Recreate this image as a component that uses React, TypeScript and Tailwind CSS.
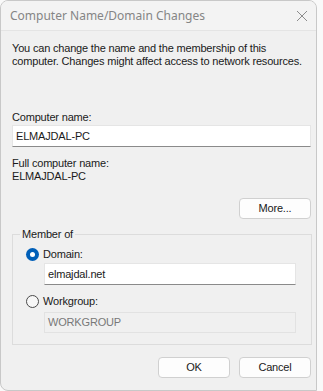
import React from 'react';

const ui = { fontFamily: '"Liberation Sans", Arial, sans-serif' };

const Radio = ({ checked }: { checked: boolean }) =>
  checked ? (
    <span className="w-[13px] h-[13px] rounded-full bg-[#005fb8] flex items-center justify-center shrink-0">
      <span className="w-[5px] h-[5px] rounded-full bg-white" />
    </span>
  ) : (
    <span className="w-[13px] h-[13px] rounded-full border border-[#4a4a4a] bg-[#f7f7f7] shrink-0" />
  );

const Button = ({ label }: { label: string }) => (
  <button className="w-[72px] h-[21px] rounded-[4px] border border-[#d0d0d0] bg-[#fdfdfd] text-[11px] leading-[13px] text-[#1a1a1a] flex items-center justify-center">
    {label}
  </button>
);

export default function App() {
  return (
    <div className="w-[323px] h-[391px] bg-[#f9f9f9]" style={ui}>
      <div className="w-[317px] h-[391px] border border-[#c8c8c8] rounded-t-lg rounded-bl-lg bg-[#f0f0f0] flex flex-col overflow-hidden">
        {/* Title bar */}
        <div className="h-[30px] shrink-0 bg-[#f3f3f3] border-b border-[#e4e4e4] flex items-center justify-between pl-[9px] pr-[6px]">
          <span className="text-[12px] text-[#858585] pt-[1px]" style={{ fontFamily: '"Noto Sans", "Open Sans", sans-serif' }}>
            Computer Name/Domain Changes
          </span>
          <svg width="12" height="12" viewBox="0 0 12 12" className="mr-[2px]">
            <path d="M1 1 L11 11 M11 1 L1 11" stroke="#8c8c8c" strokeWidth="1" fill="none" />
          </svg>
        </div>

        {/* Body */}
        <div className="flex flex-col pt-[11px] pl-[11px] pr-[4px] text-[11px] leading-[13px] text-[#1a1a1a] tracking-[-0.18px]">
          <p className="whitespace-nowrap">
            You can change the name and the membership of this
            <br />
            computer. Changes might affect access to network resources.
          </p>

          <div className="mt-[43px]">Computer name:</div>
          <div className="mt-[1px] w-[299px] h-[22px] bg-white border border-[#e5e5e5] border-b-[#8a8a8a] flex items-center px-[3px]">
            ELMAJDAL-PC
          </div>

          <div className="mt-[10px]">Full computer name:</div>
          <div>ELMAJDAL-PC</div>

          <div className="mt-[15px] w-[299px] flex justify-end">
            <Button label="More..." />
          </div>

          <fieldset className="mt-[9px] w-[300px] h-[117px] border border-[#dcdcdc]">
            <legend className="ml-[7px] px-[2px]">Member of</legend>
            <div className="pl-[20px]">
              <div className="mt-[7px] flex items-center gap-[4px] -ml-[7px]">
                <Radio checked />
                <span>Domain:</span>
              </div>
              <div className="mt-[2px] ml-[11px] w-[252px] h-[22px] bg-white border border-[#e5e5e5] border-b-[#8a8a8a] flex items-center px-[3px]">
                elmajdal.net
              </div>
              <div className="mt-[10px] flex items-center gap-[4px] -ml-[7px]">
                <Radio checked={false} />
                <span>Workgroup:</span>
              </div>
              <div className="mt-[4px] ml-[11px] w-[252px] h-[21px] bg-[#f0f0f0] border border-[#e2e2e2] flex items-center px-[3px] text-[#787878]">
                WORKGROUP
              </div>
            </div>
          </fieldset>

          <div className="mt-[12px] w-[299px] flex justify-end gap-[9px]">
            <Button label="OK" />
            <Button label="Cancel" />
          </div>
        </div>
      </div>
    </div>
  );
}
